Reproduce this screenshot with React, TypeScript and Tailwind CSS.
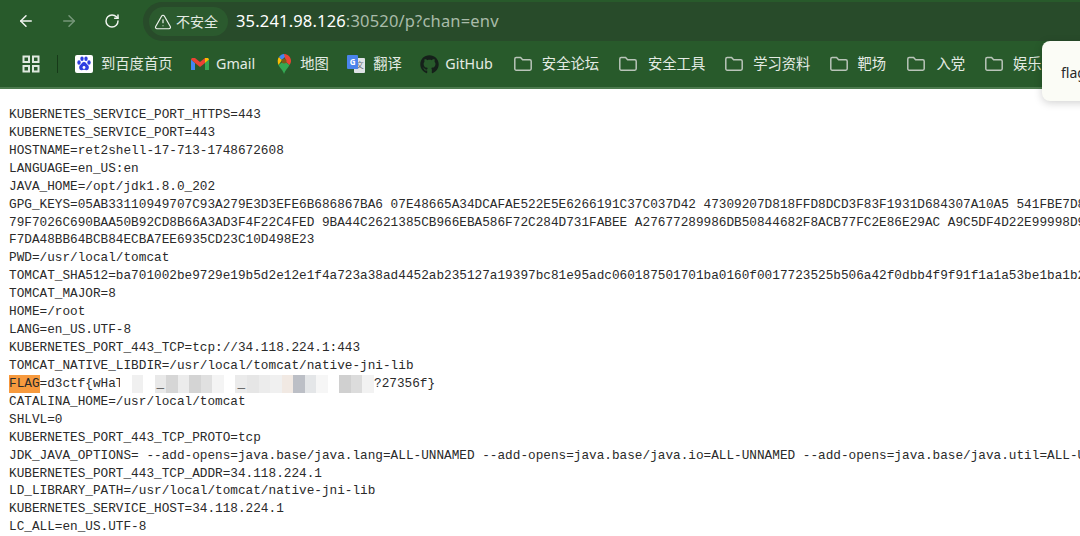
import { ArrowLeft, ArrowRight, RotateCw, TriangleAlert } from "lucide-react";
import { FaGithub } from "react-icons/fa";

const uiFont = "font-['Noto_Sans','Noto_Sans_CJK_SC',sans-serif]";

const linesBefore = [
  "KUBERNETES_SERVICE_PORT_HTTPS=443",
  "KUBERNETES_SERVICE_PORT=443",
  "HOSTNAME=ret2shell-17-713-1748672608",
  "LANGUAGE=en_US:en",
  "JAVA_HOME=/opt/jdk1.8.0_202",
  "GPG_KEYS=05AB33110949707C93A279E3D3EFE6B686867BA6 07E48665A34DCAFAE522E5E6266191C37C037D42 47309207D818FFD8DCD3F83F1931D684307A10A5 541FBE7D8",
  "79F7026C690BAA50B92CD8B66A3AD3F4F22C4FED 9BA44C2621385CB966EBA586F72C284D731FABEE A27677289986DB50844682F8ACB77FC2E86E29AC A9C5DF4D22E99998D9",
  "F7DA48BB64BCB84ECBA7EE6935CD23C10D498E23",
  "PWD=/usr/local/tomcat",
  "TOMCAT_SHA512=ba701002be9729e19b5d2e12e1f4a723a38ad4452ab235127a19397bc81e95adc060187501701ba0160f0017723525b506a42f0dbb4f9f91f1a1a53be1ba1b2",
  "TOMCAT_MAJOR=8",
  "HOME=/root",
  "LANG=en_US.UTF-8",
  "KUBERNETES_PORT_443_TCP=tcp://34.118.224.1:443",
  "TOMCAT_NATIVE_LIBDIR=/usr/local/tomcat/native-jni-lib",
];

const linesAfter = [
  "CATALINA_HOME=/usr/local/tomcat",
  "SHLVL=0",
  "KUBERNETES_PORT_443_TCP_PROTO=tcp",
  "JDK_JAVA_OPTIONS= --add-opens=java.base/java.lang=ALL-UNNAMED --add-opens=java.base/java.io=ALL-UNNAMED --add-opens=java.base/java.util=ALL-U",
  "KUBERNETES_PORT_443_TCP_ADDR=34.118.224.1",
  "LD_LIBRARY_PATH=/usr/local/tomcat/native-jni-lib",
  "KUBERNETES_SERVICE_HOST=34.118.224.1",
  "LC_ALL=en_US.UTF-8",
];

// mosaic cells over the flag value
const mosaic = [
  "#ffffff", "#f0f0f0", "#ffffff", "#e9e9e9", "#d6d6d6", "#ececec", "#d4d4d4", "#e0e0e0",
  "#f4f4f4", "#ffffff", "#ebebeb", "#e6e6e6", "#ececec", "#f0f0f0", "#f1e9e3", "#bcbfc6",
  "#e4e6e8", "#f6f6f6", "#ffffff", "#d0d0d0", "#dcdcdc", "#f2f2f2",
];

function Folder() {
  return (
    <svg width="20" height="16" viewBox="0 0 20 16" fill="none" className="shrink-0">
      <path
        d="M1.8 3c0-.8.6-1.4 1.4-1.4h4.4l2 2.2h7.2c.8 0 1.4.6 1.4 1.4v7.6c0 .8-.6 1.4-1.4 1.4H3.200c-.8 0-1.4-.6-1.400-1.400z"
        stroke="#b9c4b9"
        strokeWidth="1.5"
      />
    </svg>
  );
}

function AppsIcon() {
  return (
    <svg width="18" height="18" viewBox="0 0 18 18" fill="none" stroke="#dfe8df" strokeWidth="2" className="shrink-0">
      <rect x="1.500" y="1.500" width="5.500" height="5.500" />
      <rect x="11" y="1.500" width="5.500" height="5.500" />
      <rect x="1.500" y="11" width="5.500" height="5.500" />
      <rect x="11" y="11" width="5.500" height="5.500" />
    </svg>
  );
}

function BaiduIcon() {
  return (
    <svg width="18" height="18" viewBox="0 0 18 18" className="shrink-0">
      <rect width="18" height="18" rx="2" fill="#fff" />
      <g fill="#2f3fe0">
        <ellipse cx="4" cy="7.500" rx="1.700" ry="2.200" />
        <ellipse cx="7" cy="3.800" rx="1.700" ry="2.300" />
        <ellipse cx="11" cy="3.800" rx="1.700" ry="2.300" />
        <ellipse cx="14" cy="7.500" rx="1.700" ry="2.200" />
        <path d="M9 7c2 0 2.500 2 4 3.200 1.500 1.400 1 5-1.500 5-1 0-1.500-.4-2.500-.4s-1.500.4-2.500.4c-2.500 0-3-3.600-1.500-5C6.500 9 7 7 9 7z" />
      </g>
      <circle cx="9" cy="12.500" r="1.400" fill="#fff" />
    </svg>
  );
}

function GmailIcon() {
  return (
    <svg width="18" height="14" viewBox="0 0 18 14" className="shrink-0">
      <path d="M0 2.500V13h4V6z" fill="#4285f4" />
      <path d="M14 6v7h4V2.500z" fill="#34a853" />
      <path d="M0 2.500 4 6l5 4 5-4V1l-5 4-5-4H2C.8 1 0 1.600 0 2.500z" fill="#ea4335" />
      <path d="M14 1v5l4-3.500C18 1.600 17.200 1 16 1z" fill="#fbbc04" />
    </svg>
  );
}

function MapsIcon() {
  return (
    <svg width="14" height="20" viewBox="0 0 14 20" className="shrink-0">
      <path d="M7 20C6 16 3 14.500 1.500 11L7 7l5.500 4C11 14.500 8 16 7 20z" fill="#34a853" />
      <path d="M1.500 11C.5 9 .2 5 2 3l3 3z" fill="#fbbc04" />
      <path d="M2 3C3.500 1 5 .2 7 0l2 2-4 4z" fill="#4285f4" />
      <path d="M7 0c3 0 7 2.500 7 7 0 1.500-.6 2.800-1.500 4L9 8z" fill="#ea4335" />
      <circle cx="7" cy="7" r="2.500" fill="#7a5a1a" />
    </svg>
  );
}

function TranslateIcon() {
  return (
    <div className="relative h-[19px] w-[18px] shrink-0">
      <div className="absolute right-0 top-[3px] flex h-[15px] w-[11px] items-center justify-center rounded-[1px] bg-[#dfe3e6] text-[8px] leading-none text-[#6b7177]">
        文
      </div>
      <div className="absolute left-0 top-0 flex h-[14px] w-[11px] items-center justify-center rounded-[1px] bg-[#4a84ec] text-[8px] font-bold leading-none text-white">
        G
      </div>
    </div>
  );
}

function Bookmark({ icon, label, gap, ml }: { icon: React.ReactNode; label: string; gap: string; ml: string }) {
  return (
    <div className={`flex shrink-0 items-center ${gap} ${ml}`}>
      {icon}
      <span className="whitespace-nowrap text-[14.300px] leading-none text-[#e4ebe4]">{label}</span>
    </div>
  );
}

export default function App() {
  return (
    <div className="relative h-[536px] w-[1080px] overflow-hidden bg-white">
      <header className={`border-b-2 border-[#4c7a4e] bg-[#285a2b] ${uiFont}`}>
        <div className="flex h-[41px] items-center pl-[17px]">
          <ArrowLeft size={18} color="#f1f5f1" strokeWidth={2} />
          <ArrowRight size={18} color="#76977a" strokeWidth={2} className="ml-[25px]" />
          <RotateCw size={16} color="#f1f5f1" strokeWidth={2.200} className="ml-[26px]" />
          <div className="ml-[23px] mt-[2px] flex h-[39px] flex-1 items-center rounded-l-[20px] bg-[#284b2a] pl-[6px]">
            <div className="flex h-[29px] w-[79px] items-center gap-[4px] rounded-full bg-[#2b5a2e] pl-[5px]">
              <TriangleAlert size={18} color="#eef3ee" strokeWidth={1.600} />
              <span className="text-[14px] leading-none text-[#e4ebe4]">不安全</span>
            </div>
            <div className="ml-[8px] whitespace-nowrap text-[16.500px] leading-none tracking-[0.170px]">
              <span className="text-white">35.241.98.126</span>
              <span className="text-[#a9bba9]">:30520/p?chan=env</span>
            </div>
          </div>
        </div>
        <div className="flex h-[46px] items-center overflow-hidden pl-[22px]">
          <AppsIcon />
          <div className="ml-[17px] h-[18px] w-[1px] bg-[#173a19]" />
          <Bookmark icon={<BaiduIcon />} label="到百度首页" gap="gap-[8px]" ml="ml-[17px]" />
          <Bookmark icon={<GmailIcon />} label="Gmail" gap="gap-[7px]" ml="ml-[18.500px]" />
          <Bookmark icon={<MapsIcon />} label="地图" gap="gap-[9px]" ml="ml-[22px]" />
          <Bookmark icon={<TranslateIcon />} label="翻译" gap="gap-[8px]" ml="ml-[18.500px]" />
          <Bookmark icon={<FaGithub size={19} color="#15201a" />} label="GitHub" gap="gap-[6px]" ml="ml-[18.500px]" />
          <Bookmark icon={<Folder />} label="安全论坛" gap="gap-[9px]" ml="ml-[20px]" />
          <Bookmark icon={<Folder />} label="安全工具" gap="gap-[10px]" ml="ml-[19px]" />
          <Bookmark icon={<Folder />} label="学习资料" gap="gap-[9px]" ml="ml-[19px]" />
          <Bookmark icon={<Folder />} label="靶场" gap="gap-[8px]" ml="ml-[19px]" />
          <Bookmark icon={<Folder />} label="入党" gap="gap-[10px]" ml="ml-[20.400px]" />
          <Bookmark icon={<Folder />} label="娱乐" gap="gap-[9px]" ml="ml-[19px]" />
        </div>
      </header>

      <main className="whitespace-pre pl-[9px] pt-[17px] font-['Liberation_Mono','Noto_Sans_CJK_SC',monospace] text-[12.720px] leading-[17.920px] text-[#2a2a2a]">
        {linesBefore.map((line) => (
          <div key={line}>{line}</div>
        ))}
        <div className="flex">
          <span className="bg-[#f79a3e]">FLAG</span>
          <span>=d3ctf{"{"}wHaT</span>
          <span className="-ml-[3.500px] flex h-[18px] w-[254px] items-stretch">
            {mosaic.map((color, i) => (
              <span key={i} className="flex-1 overflow-hidden text-center" style={{ backgroundColor: color }}>
                {i === 3 || i === 10 ? "_" : ""}
              </span>
            ))}
          </span>
          <span>?27356f{"}"}</span>
        </div>
        {linesAfter.map((line) => (
          <div key={line}>{line}</div>
        ))}
      </main>

      {/* toast peeking in from the right edge */}
      <div className={`absolute left-[1042px] top-[41px] flex h-[60px] w-[80px] items-center rounded-[8px] bg-[#fbfcf6] pl-[19px] pt-[2px] text-[14px] text-[#2a2a2a] shadow-[0_2px_8px_rgba(0,0,0,0.18)] ${uiFont}`}>
        flag
      </div>
    </div>
  );
}
